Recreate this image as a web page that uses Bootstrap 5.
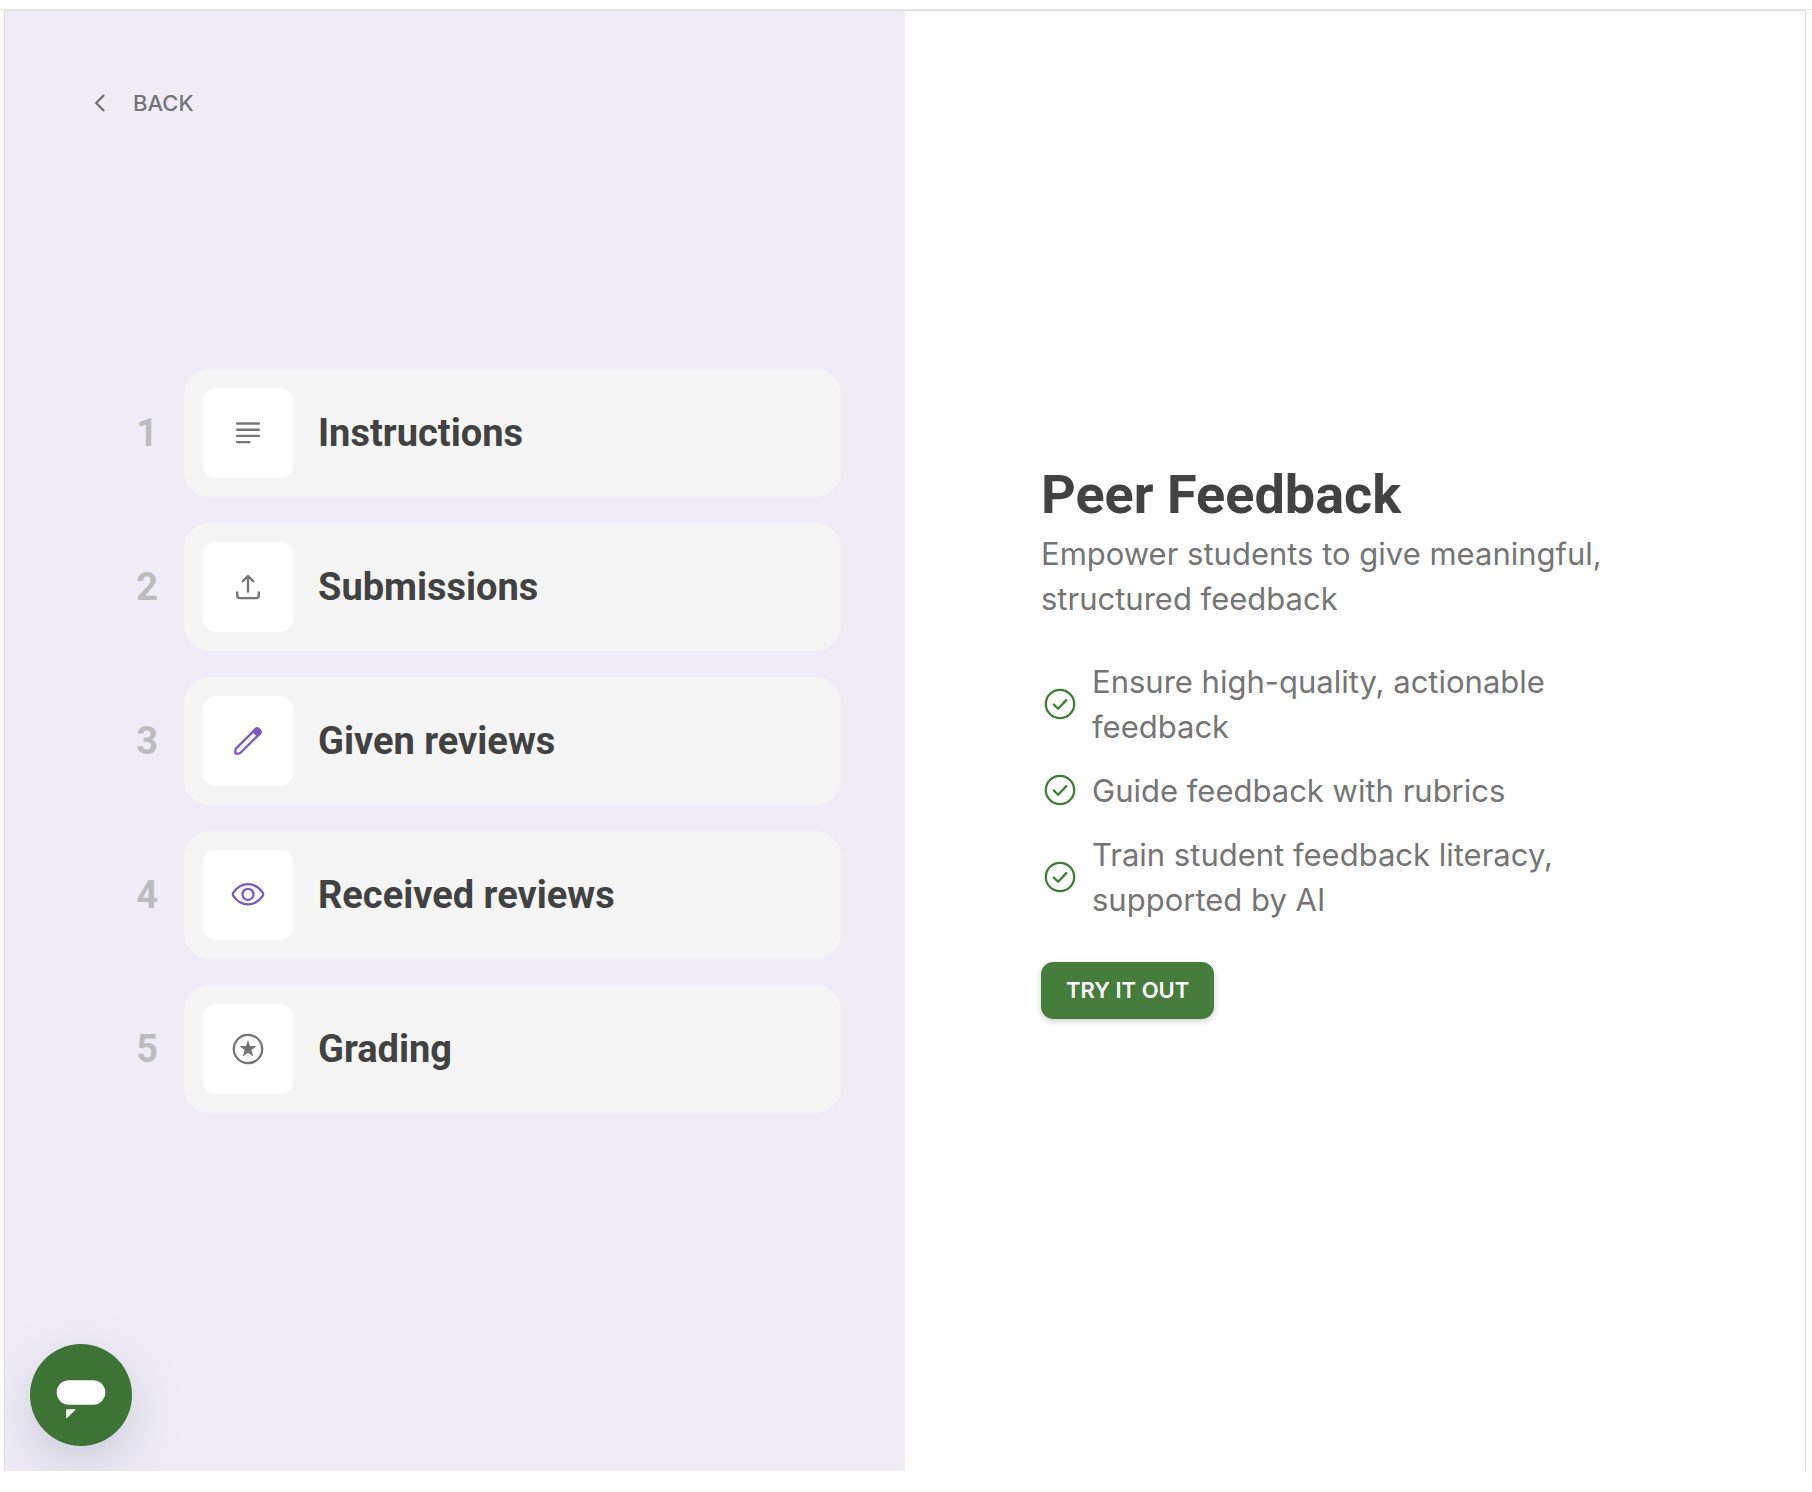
<!DOCTYPE html>
<html lang="en">
<head>
<meta charset="utf-8">
<meta name="viewport" content="width=device-width, initial-scale=1">
<title>Peer Feedback</title>
<link rel="stylesheet" href="https://cdn.jsdelivr.net/npm/bootstrap@5.3.0/dist/css/bootstrap.min.css">
<style>
  body { font-family: Inter, "Liberation Sans", sans-serif; color: #757575; background: #fff; }
  .page { padding-top: 9px; padding-bottom: 21px; }
  .page-rule { border-top: 1px solid #e8e8e8; }
  .frame { margin: 0 6px 0 4px; border: solid #dcdcdc; border-width: 1px 1px 0; overflow: hidden; }
  .flow-pane { display: grid; grid-template-rows: 1fr auto 1fr; background: #f0edf8; padding: 0 64px 0 82px; }
  .back-link { font-size: 22px; line-height: 32px; font-weight: 500; color: #757575; gap: 22px; margin-top: 76px; }
  .steps { gap: 26px; }
  .step { gap: 26px; }
  .step-number { width: 71px; font: 700 38px/46px Roboto, Inter, sans-serif; color: #bdbdbd; }
  .step-card { background: #f5f5f5; border-radius: 26px; padding: 19px; gap: 25px; }
  .step-tile { width: 90px; height: 90px; border-radius: 13px; }
  .step-title { font: 700 38px/46px Roboto, Inter, sans-serif; color: #424242; }
  .accent { color: #7e57c2; }
  .info-pane { padding: 0 136px; }
  .info-title { font: 700 54px/62px Roboto, Inter, sans-serif; color: #424242; margin-bottom: 5px; }
  .info-text { font-size: 31px; line-height: 45px; }
  .benefits { gap: 19px; margin: 38px 0 40px; }
  .benefit { gap: 13px; }
  .benefit svg { color: #3f7d36; }
  .try-btn { --bs-btn-color: #fff; --bs-btn-bg: #467d3c; --bs-btn-border-color: #467d3c; --bs-btn-hover-color: #fff; --bs-btn-hover-bg: #3b6c32; --bs-btn-hover-border-color: #3b6c32; --bs-btn-font-size: 22px; --bs-btn-line-height: 31px; --bs-btn-font-weight: 600; --bs-btn-padding-y: 12px; --bs-btn-padding-x: 24px; --bs-btn-border-radius: 12px; box-shadow: 0 2px 6px rgba(0, 0, 0, .2); }
  .chat-btn { left: 25px; bottom: 25px; width: 102px; height: 102px; background: #3d7334; box-shadow: 0 18px 56px rgba(40, 60, 80, .2); }
</style>
</head>
<body>
<div class="page min-vh-100 d-flex flex-column">
  <div class="page-rule"></div>
  <main class="frame row g-0 flex-grow-1 position-relative">
    <section class="flow-pane col-6" aria-label="Workflow">
      <nav>
        <a class="back-link d-inline-flex align-items-center text-decoration-none" href="#">
          <svg width="24" height="24" viewBox="0 0 24 24" fill="none" stroke="currentColor" stroke-width="2.400" stroke-linecap="round" stroke-linejoin="round" aria-hidden="true"><path d="M16.500 4.700 9.200 12l7.300 7.300"/></svg>
          BACK
        </a>
      </nav>
      <ol class="steps list-unstyled d-flex flex-column mb-0">
        <li class="step d-flex align-items-center">
          <span class="step-number text-end">1</span>
          <div class="step-card d-flex align-items-center flex-grow-1">
            <span class="step-tile bg-white d-flex align-items-center justify-content-center flex-shrink-0">
              <svg width="38" height="38" viewBox="0 0 38 38" fill="none" stroke="#757575" stroke-width="2.400" stroke-linecap="round" aria-hidden="true"><path d="M8.200 9.500h21.600M8.200 15.700h21.600M8.200 21.900h21.600M8.200 28.100h12.200"/></svg>
            </span>
            <h2 class="step-title mb-0">Instructions</h2>
          </div>
        </li>
        <li class="step d-flex align-items-center">
          <span class="step-number text-end">2</span>
          <div class="step-card d-flex align-items-center flex-grow-1">
            <span class="step-tile bg-white d-flex align-items-center justify-content-center flex-shrink-0">
              <svg width="38" height="38" viewBox="0 0 38 38" fill="none" stroke="#757575" stroke-width="2.400" stroke-linecap="round" stroke-linejoin="round" aria-hidden="true"><path d="M19 23.500V8.200M13.800 13.200 19 8l5.200 5.200M8.200 24.500v3q0 2.600 2.600 2.600h16.400q2.600 0 2.600-2.600v-3"/></svg>
            </span>
            <h2 class="step-title mb-0">Submissions</h2>
          </div>
        </li>
        <li class="step d-flex align-items-center">
          <span class="step-number text-end">3</span>
          <div class="step-card d-flex align-items-center flex-grow-1">
            <span class="step-tile accent bg-white d-flex align-items-center justify-content-center flex-shrink-0">
              <svg width="38" height="38" viewBox="0 0 38 38" fill="none" stroke="currentColor" stroke-width="2.300" stroke-linejoin="round" aria-hidden="true"><path d="M6.400 31.600v-3.200q0-1.200.8-2L26.400 7.200q1.700-1.700 3.400 0l1 1q1.700 1.700 0 3.400L11.600 30.800q-.8.800-2 .800Z"/><path fill="currentColor" d="m24.200 9.400 2.200-2.200q1.700-1.700 3.400 0l1 1q1.700 1.700 0 3.400l-2.200 2.200Z"/></svg>
            </span>
            <h2 class="step-title mb-0">Given reviews</h2>
          </div>
        </li>
        <li class="step d-flex align-items-center">
          <span class="step-number text-end">4</span>
          <div class="step-card d-flex align-items-center flex-grow-1">
            <span class="step-tile accent bg-white d-flex align-items-center justify-content-center flex-shrink-0">
              <svg width="38" height="38" viewBox="0 0 38 38" fill="none" stroke="currentColor" stroke-width="2.300" stroke-linejoin="round" aria-hidden="true"><path d="M4.300 16.700C7.800 11.700 13.100 8.200 19 8.200s11.200 3.500 14.700 8.500q1 1.600 0 3.200C30.200 24.900 24.900 28.400 19 28.400S7.800 24.900 4.300 19.900q-1-1.600 0-3.200Z"/><circle cx="19" cy="18.300" r="5.500"/></svg>
            </span>
            <h2 class="step-title mb-0">Received reviews</h2>
          </div>
        </li>
        <li class="step d-flex align-items-center">
          <span class="step-number text-end">5</span>
          <div class="step-card d-flex align-items-center flex-grow-1">
            <span class="step-tile bg-white d-flex align-items-center justify-content-center flex-shrink-0">
              <svg width="38" height="38" viewBox="0 0 38 38" aria-hidden="true"><circle cx="19" cy="19" r="14.200" fill="none" stroke="#757575" stroke-width="2.300"/><path fill="#757575" d="m19 9.900 2.100 6.100 6.400.100-5.100 3.900 1.900 6.500-5.300-3.800-5.300 3.800 1.900-6.500-5.100-3.900 6.400-.100Z"/></svg>
            </span>
            <h2 class="step-title mb-0">Grading</h2>
          </div>
        </li>
      </ol>
    </section>
    <section class="info-pane col-6 d-flex flex-column justify-content-center align-items-start">
      <h1 class="info-title">Peer Feedback</h1>
      <p class="info-text mb-0">Empower students to give meaningful, structured feedback</p>
      <ul class="benefits info-text list-unstyled d-flex flex-column">
        <li class="benefit d-flex align-items-center">
          <svg class="flex-shrink-0" width="38" height="38" viewBox="0 0 38 38" fill="none" stroke="currentColor" stroke-width="2.300" stroke-linecap="round" stroke-linejoin="round" aria-hidden="true"><circle cx="19" cy="19" r="14.200"/><path d="m12.800 19.500 4.300 4.300 8.200-8.700"/></svg>
          <span>Ensure high-quality, actionable feedback</span>
        </li>
        <li class="benefit d-flex align-items-center">
          <svg class="flex-shrink-0" width="38" height="38" viewBox="0 0 38 38" fill="none" stroke="currentColor" stroke-width="2.300" stroke-linecap="round" stroke-linejoin="round" aria-hidden="true"><circle cx="19" cy="19" r="14.200"/><path d="m12.800 19.500 4.300 4.300 8.200-8.700"/></svg>
          <span>Guide feedback with rubrics</span>
        </li>
        <li class="benefit d-flex align-items-center">
          <svg class="flex-shrink-0" width="38" height="38" viewBox="0 0 38 38" fill="none" stroke="currentColor" stroke-width="2.300" stroke-linecap="round" stroke-linejoin="round" aria-hidden="true"><circle cx="19" cy="19" r="14.200"/><path d="m12.800 19.500 4.300 4.300 8.200-8.700"/></svg>
          <span>Train student feedback literacy, supported by AI</span>
        </li>
      </ul>
      <button type="button" class="try-btn btn">TRY IT OUT</button>
    </section>
    <button type="button" class="chat-btn position-absolute rounded-circle border-0 p-0" aria-label="Open chat">
      <svg class="d-block" width="102" height="102" viewBox="0 0 102 102" fill="#fff" aria-hidden="true"><rect x="26.700" y="36.300" width="48.600" height="24.400" rx="12.200"/><path d="M36.200 65.200h9.800l-9.800 9.600Z"/></svg>
    </button>
  </main>
</div>
<script src="https://cdn.jsdelivr.net/npm/bootstrap@5.3.0/dist/js/bootstrap.bundle.min.js"></script>
</body>
</html>
